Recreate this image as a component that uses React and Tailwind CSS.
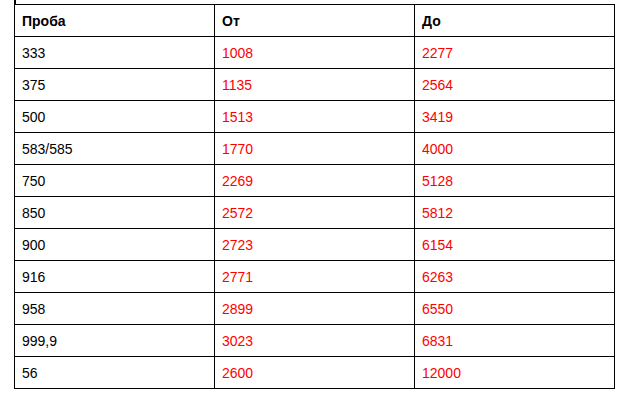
export default function App() {
  const rows = [
    ["333", "1008", "2277"],
    ["375", "1135", "2564"],
    ["500", "1513", "3419"],
    ["583/585", "1770", "4000"],
    ["750", "2269", "5128"],
    ["850", "2572", "5812"],
    ["900", "2723", "6154"],
    ["916", "2771", "6263"],
    ["958", "2899", "6550"],
    ["999,9", "3023", "6831"],
    ["56", "2600", "12000"],
  ];
  const td = "border border-black w-[200px] px-[7px] pt-[8px] pb-[7px] leading-[16px] align-middle";
  return (
    <div className="bg-white w-[628px] h-[401px] pl-[14px] text-[14px] text-black" style={{ fontFamily: '"Liberation Sans", Arial, sans-serif' }}>
      <div className="w-[2px] h-[5px] bg-black -mb-px" />
      <table className="border-collapse w-[601px]">
        <thead>
          <tr>
            <th className={td + " text-left font-bold"}>Проба</th>
            <th className={td + " text-left font-bold"}>От</th>
            <th className={td + " text-left font-bold"}>До</th>
          </tr>
        </thead>
        <tbody>
          {rows.map((r) => (
            <tr key={r[0]}>
              <td className={td}>{r[0]}</td>
              <td className={td + " text-[#ff0000]"}>{r[1]}</td>
              <td className={td + " text-[#ff0000]"}>{r[2]}</td>
            </tr>
          ))}
        </tbody>
      </table>
    </div>
  );
}
